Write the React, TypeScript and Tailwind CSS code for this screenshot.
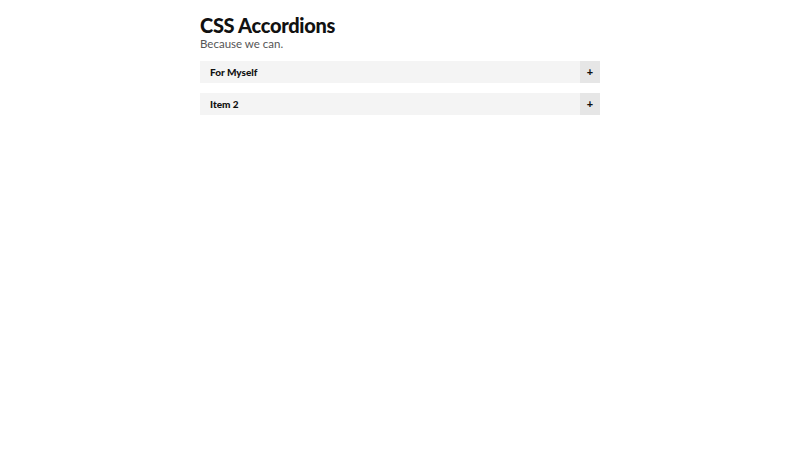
const items = ["For Myself", "Item 2"];

function AccordionItem({ label }: { label: string }) {
  return (
    <div className="flex h-[22px] items-stretch bg-[#f4f4f4]">
      <span className="flex flex-1 items-center pl-[10px] text-[10px] font-black text-[#111]">{label}</span>
      <span className="flex w-5 items-center justify-center bg-[#e6e6e6] text-[11px] font-black text-[#111]">+</span>
    </div>
  );
}

export default function App() {
  return (
    <div className="min-h-[450px] bg-white font-['Lato',sans-serif]">
      <div className="mx-auto w-[400px] pt-[13px]">
        <h1 className="text-[20px] leading-[24px] font-black tracking-[-0.3px] text-[#111]">CSS Accordions</h1>
        <p className="text-[11.5px] leading-[14px] text-[#555]">Because we can.</p>
        <div className="mt-[10px] flex flex-col gap-[10px]">
          {items.map((item) => (
            <AccordionItem key={item} label={item} />
          ))}
        </div>
      </div>
    </div>
  );
}
